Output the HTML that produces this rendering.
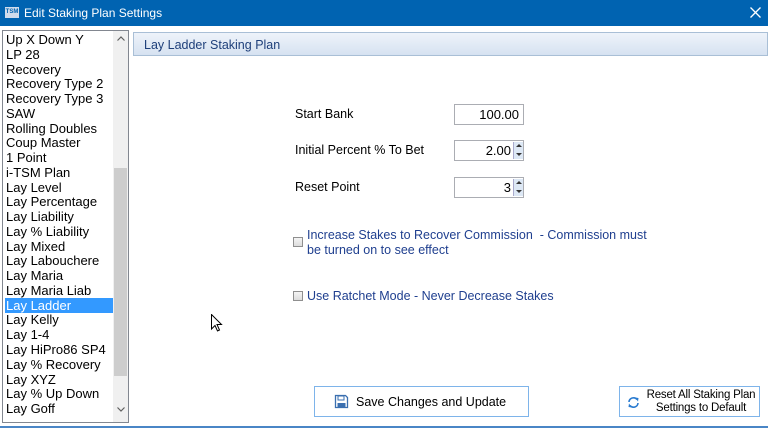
<!DOCTYPE html>
<html><head><style>
*{margin:0;padding:0;box-sizing:border-box}
body{width:768px;height:428px;background:#fff;position:relative;overflow:hidden;font-family:"Liberation Sans",Arial,sans-serif}
.t{position:absolute;left:0;top:0;width:768px;height:26px;background:#0063b1;color:#fff;font-size:12px}
.a{position:absolute}
.lb{position:absolute;left:2px;top:30px;width:127px;height:393px;border:1px solid #828790;overflow:hidden}
.it{position:absolute;left:2px;height:15px;line-height:15px;font-size:13px;color:#000;white-space:nowrap;width:108px;padding-left:1px}
.sel{background:#3399ff;color:#fff}
.lab{position:absolute;font-size:12.5px;color:#000}
.inp{position:absolute;left:454px;width:70px;height:21px;border:1px solid #abadb3;font-size:13px;text-align:right;padding-right:4px;line-height:19px}
.sp{position:absolute;right:0;top:1px;width:10px;height:17px;background:#dde8f5;border-left:1px solid #aac}
.sp:before{content:"";position:absolute;left:2px;top:2px;border:3px solid transparent;border-bottom:3px solid #333;border-top:0}
.sp:after{content:"";position:absolute;left:2px;top:11px;border:3px solid transparent;border-top:3px solid #333;border-bottom:0}
.cb{position:absolute;width:10px;height:10px;border:1px solid #8f8f8f;background:linear-gradient(#f4f4f4,#dcdcdc)}
.bl{position:absolute;font-size:12.5px;color:#1f3f8f;white-space:nowrap}
.btn{position:absolute;border:1px solid #7eb4ea;background:#fff;font-size:12.5px;color:#000}
</style></head><body>
<div class="t"><div class="a" style="left:5px;top:7px;width:14px;height:11px;background:#d0dcec;color:#0063b1;font-size:6px;font-weight:bold;line-height:11px;text-align:center">TSM</div><div class="a" style="left:24px;top:6px">Edit Staking Plan Settings</div><svg class="a" style="left:750px;top:7px" width="11" height="11"><path d="M0.5 0.5L10.5 10.5M10.5 0.5L0.5 10.5" stroke="#fff" stroke-width="1.3"/></svg></div>
<div class="lb">
<div class="it" style="top:1px">Up X Down Y</div>
<div class="it" style="top:15.8px">LP 28</div>
<div class="it" style="top:30.5px">Recovery</div>
<div class="it" style="top:45.3px">Recovery Type 2</div>
<div class="it" style="top:60px">Recovery Type 3</div>
<div class="it" style="top:74.8px">SAW</div>
<div class="it" style="top:89.6px">Rolling Doubles</div>
<div class="it" style="top:104.3px">Coup Master</div>
<div class="it" style="top:119px">1 Point</div>
<div class="it" style="top:133.8px">i-TSM Plan</div>
<div class="it" style="top:148.6px">Lay Level</div>
<div class="it" style="top:163.4px">Lay Percentage</div>
<div class="it" style="top:178.1px">Lay Liability</div>
<div class="it" style="top:192.9px">Lay % Liability</div>
<div class="it" style="top:207.6px">Lay Mixed</div>
<div class="it" style="top:222.4px">Lay Labouchere</div>
<div class="it" style="top:237.2px">Lay Maria</div>
<div class="it" style="top:251.9px">Lay Maria Liab</div>
<div class="it sel" style="top:266.7px">Lay Ladder</div>
<div class="it" style="top:281.4px">Lay Kelly</div>
<div class="it" style="top:296.2px">Lay 1-4</div>
<div class="it" style="top:311px">Lay HiPro86 SP4</div>
<div class="it" style="top:325.7px">Lay % Recovery</div>
<div class="it" style="top:340.5px">Lay XYZ</div>
<div class="it" style="top:355.2px">Lay % Up Down</div>
<div class="it" style="top:370px">Lay Goff</div>
<div class="a" style="left:110px;top:0;width:15px;height:391px;background:#f0f0f0"></div>
<div class="a" style="left:111px;top:137px;width:13px;height:208px;background:#cdcdcd"></div>
<svg class="a" style="left:114px;top:5px" width="8" height="5"><path d="M0.5 4.5L4 1L7.5 4.5" fill="none" stroke="#606060" stroke-width="1.2"/></svg>
<svg class="a" style="left:114px;top:376px" width="8" height="5"><path d="M0.5 0.5L4 4L7.5 0.5" fill="none" stroke="#606060" stroke-width="1.2"/></svg>
</div>
<div class="a" style="left:133px;top:32px;width:635px;height:24px;border:1px solid #a9bfd6;background:linear-gradient(#eef3fa,#d6e2f1);font-size:12.5px;color:#1e3f7a;padding:5px 10px">Lay Ladder Staking Plan</div>
<div class="lab" style="left:295px;top:107px">Start Bank</div>
<div class="lab" style="left:295px;top:143px">Initial Percent % To Bet</div>
<div class="lab" style="left:295px;top:180px">Reset Point</div>
<div class="inp" style="top:104px">100.00</div>
<div class="inp" style="top:140px;padding-right:12px">2.00<div class="sp"></div></div>
<div class="inp" style="top:177px;padding-right:12px">3<div class="sp"></div></div>
<div class="cb" style="left:293px;top:237px"></div>
<div class="bl" style="left:307px;top:228px;line-height:15px">Increase Stakes to Recover Commission &nbsp;- Commission must<br>be turned on to see effect</div>
<div class="cb" style="left:293px;top:291px"></div>
<div class="bl" style="left:307px;top:289px">Use Ratchet Mode - Never Decrease Stakes</div>
<svg class="a" style="left:211px;top:314px" width="12" height="18"><path d="M0.5 0.5V15L4 11.5L6.5 17L8.5 16L6 10.5H10.5Z" fill="#fff" stroke="#000" stroke-width="1"/></svg>
<div class="btn" style="left:314px;top:386px;width:215px;height:31px"><svg class="a" style="left:19px;top:7px" width="15" height="15" viewBox="0 0 15 15"><path d="M1.5 1.5h10l2 2v10h-12z" fill="none" stroke="#3a6fb0" stroke-width="1.3"/><rect x="4" y="2" width="6" height="4" fill="none" stroke="#3a6fb0"/><rect x="3.5" y="9" width="8" height="4.5" fill="#3a6fb0"/></svg><span class="a" style="left:41px;top:8px">Save Changes and Update</span></div>
<div class="btn" style="left:619px;top:386px;width:141px;height:31px"><svg class="a" style="left:7px;top:9px" width="13" height="13" viewBox="0 0 13 13"><path d="M2 6A4.5 4.5 0 0 1 10 3.5M11 7A4.5 4.5 0 0 1 3 9.5" fill="none" stroke="#2a7bd0" stroke-width="1.6"/><path d="M8 1.5L11.5 2L11 5.5Z M5 11.5L1.5 11L2 7.5Z" fill="#2a7bd0"/></svg><div class="a" style="left:24px;top:2px;width:114px;font-size:11.5px;line-height:13px;text-align:center;white-space:nowrap;letter-spacing:-0.2px">Reset All Staking Plan<br>Settings to Default</div></div>
<div class="a" style="left:0;top:426px;width:768px;height:2px;background:#4a86c6"></div>
</body></html>
